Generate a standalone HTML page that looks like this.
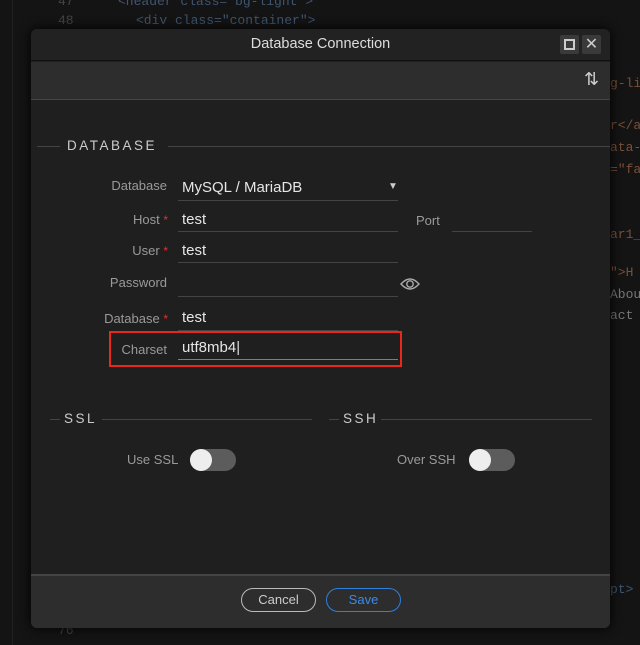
<!DOCTYPE html>
<html><head><style>
*{margin:0;padding:0;box-sizing:border-box}
body{width:640px;height:645px;background:#141414;position:relative;overflow:hidden;font-family:"Liberation Sans",sans-serif}
.code{position:absolute;font-family:"Liberation Mono",monospace;font-size:13px;color:#444;white-space:pre}
.a{position:absolute}
.lbl{position:absolute;color:#9a9a9a;font-size:13px;text-align:right}
.val{position:absolute;color:#e6e6e6;font-size:15px}
.line{position:absolute;height:1px;background:#444}
.star{color:#d33;font-size:12px}
.tog{position:absolute;width:46px;height:22px;border-radius:11px;background:#5c5c5c}
.tog:before{content:"";position:absolute;left:0;top:0;width:22px;height:22px;border-radius:50%;background:#eee}
</style></head><body>
<div class="a" style="left:12px;top:0;width:1px;height:645px;background:#222"></div>
<div class="code" style="left:58px;top:-6px">47</div>
<div class="code" style="left:58px;top:13px">48</div>
<div class="code" style="left:118px;top:-6px;color:#3e5670">&lt;header class="bg-light"&gt;</div>
<div class="code" style="left:136px;top:13px;color:#3e5670">&lt;div class="container"&gt;</div>
<div class="code" style="left:610px;top:76px;color:#7a5038">g-li</div>
<div class="code" style="left:610px;top:118px;color:#7a5038">r&lt;/a</div>
<div class="code" style="left:610px;top:140px;color:#7a5038">ata-</div>
<div class="code" style="left:610px;top:162px;color:#7a5038">="fa</div>
<div class="code" style="left:610px;top:227px;color:#7a5038">ar1_</div>
<div class="code" style="left:610px;top:265px;color:#7a5038">"&gt;H</div>
<div class="code" style="left:610px;top:287px;color:#777">Abou</div>
<div class="code" style="left:610px;top:308px;color:#777">act</div>
<div class="code" style="left:610px;top:582px;color:#3e5670">pt&gt;</div>
<div class="code" style="left:58px;top:623px">76</div>

<div class="a" style="left:31px;top:29px;width:579px;height:599px;background:#1f1f1f;border-radius:6px;overflow:hidden;box-shadow:0 0 12px #000">
 <div class="a" style="left:0;top:0;width:579px;height:32px;background:#222;border-bottom:1px solid #111"></div>
 <div class="a" style="left:0;top:0;width:579px;text-align:center;top:7px;color:#ddd;font-size:14.5px">Database Connection</div>
 <div class="a" style="left:529px;top:6px;width:19px;height:19px;background:#3a3a3a;border-radius:2px"><div class="a" style="left:4px;top:4px;width:11px;height:11px;border:2px solid #ccc"></div></div>
 <div class="a" style="left:551px;top:6px;width:19px;height:19px;background:#3a3a3a;border-radius:2px;color:#ccc;font-size:16px;text-align:center;line-height:19px">✕</div>
 <div class="a" style="left:0;top:33px;width:579px;height:38px;background:#2d2d2d;border-bottom:1px solid #3b4556"></div>
 <div class="a" style="left:553px;top:40px;color:#ccc;font-size:18px">⇅</div>
 <div class="a" style="left:0;top:545px;width:579px;height:54px;background:#2d2d2d;border-top:2px solid #444"></div>
 <div class="a" style="left:210px;top:559px;width:75px;height:24px;border:1px solid #bbb;border-radius:12px;color:#ccc;font-size:13px;text-align:center;line-height:22px">Cancel</div>
 <div class="a" style="left:295px;top:559px;width:75px;height:24px;border:1px solid #2f7fdc;border-radius:12px;color:#3b8be6;font-size:13px;text-align:center;line-height:22px">Save</div>
</div>

<div class="line" style="left:37px;top:146px;width:23px"></div>
<div class="a" style="left:67px;top:138px;color:#ccc;font-size:13.5px;letter-spacing:2.5px">DATABASE</div>
<div class="line" style="left:168px;top:146px;width:442px"></div>

<div class="lbl" style="left:90px;top:178px;width:77px">Database</div>
<div class="val" style="left:182px;top:179px">MySQL / MariaDB</div>
<div class="a" style="left:388px;top:181px;color:#ccc;font-size:10px">▼</div>
<div class="line" style="left:178px;top:200px;width:220px"></div>

<div class="lbl" style="left:90px;top:212px;width:78px">Host <span class="star">*</span></div>
<div class="val" style="left:182px;top:211px">test</div>
<div class="line" style="left:178px;top:231px;width:220px"></div>
<div class="lbl" style="left:416px;top:213px">Port</div>
<div class="line" style="left:452px;top:231px;width:80px"></div>

<div class="lbl" style="left:90px;top:243px;width:78px">User <span class="star">*</span></div>
<div class="val" style="left:182px;top:242px">test</div>
<div class="line" style="left:178px;top:262px;width:220px"></div>

<div class="lbl" style="left:90px;top:275px;width:77px">Password</div>
<div class="line" style="left:178px;top:296px;width:220px"></div>
<svg class="a" style="left:400px;top:277px" width="20" height="14" viewBox="0 0 20 14"><path d="M1 7Q10-3 19 7Q10 17 1 7Z" fill="none" stroke="#aaa" stroke-width="1.4"/><circle cx="10" cy="7" r="3.2" fill="none" stroke="#aaa" stroke-width="1.4"/></svg>

<div class="lbl" style="left:90px;top:311px;width:78px">Database <span class="star">*</span></div>
<div class="val" style="left:182px;top:309px">test</div>
<div class="line" style="left:178px;top:330px;width:220px"></div>

<div class="a" style="left:109px;top:331px;width:293px;height:36px;border:2px solid #e8281a"></div>
<div class="lbl" style="left:90px;top:342px;width:77px">Charset</div>
<div class="val" style="left:182px;top:339px">utf8mb4<span style="color:#ddd">|</span></div>
<div class="line" style="left:178px;top:359px;width:220px;background:#3b8be6"></div>

<div class="line" style="left:50px;top:419px;width:10px"></div>
<div class="a" style="left:64px;top:411px;color:#ccc;font-size:13.5px;letter-spacing:2.5px">SSL</div>
<div class="line" style="left:102px;top:419px;width:210px"></div>
<div class="line" style="left:329px;top:419px;width:10px"></div>
<div class="a" style="left:343px;top:411px;color:#ccc;font-size:13.5px;letter-spacing:2.5px">SSH</div>
<div class="line" style="left:381px;top:419px;width:211px"></div>

<div class="lbl" style="left:127px;top:452px">Use SSL</div>
<div class="tog" style="left:190px;top:449px"></div>
<div class="lbl" style="left:397px;top:452px">Over SSH</div>
<div class="tog" style="left:469px;top:449px"></div>
</body></html>
